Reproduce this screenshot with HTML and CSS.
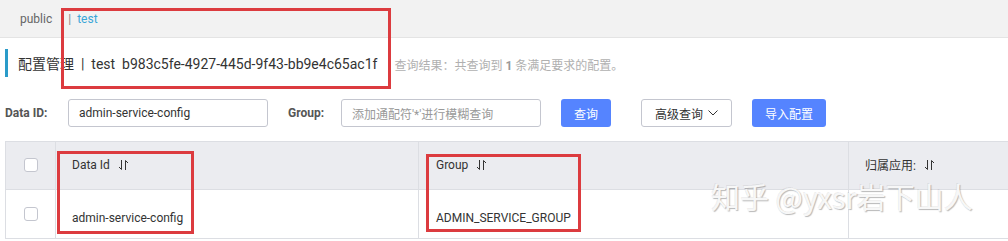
FILE: index.html
```html
<!DOCTYPE html>
<html lang="zh">
<head>
<meta charset="utf-8">
<link rel="stylesheet" href="styles.css">
</head>
<body>
<div class="page">
  <div class="topbar">
    <span class="ns">public</span>
    <span class="ns-sep">|</span>
    <span class="ns ns-active">test</span>
  </div>

  <div class="title-row">
    <div class="title-bar"></div>
    <div class="title">配置管理 &nbsp;|&nbsp; test&nbsp; b983c5fe-4927-445d-9f43-bb9e4c65ac1f</div>
    <div class="result">查询结果：共查询到 <b>1</b> 条满足要求的配置。</div>
  </div>

  <div class="search-row">
    <label class="label label-id">Data ID:</label>
    <div class="input">admin-service-config</div>
    <label class="label label-group">Group:</label>
    <div class="input placeholder">添加通配符'*'进行模糊查询</div>
    <button class="btn btn-primary btn-query">查询</button>
    <button class="btn btn-normal btn-adv">高级查询
      <svg class="caret" width="10" height="6" viewBox="0 0 10 6"><path d="M0.5 0.5 L5 5 L9.5 0.5" fill="none" stroke="#333" stroke-width="1"/></svg>
    </button>
    <button class="btn btn-primary btn-import">导入配置</button>
  </div>

  <div class="table">
    <div class="tr thead">
      <div class="td col-check"><span class="checkbox"></span></div>
      <div class="td col-id">Data Id
        <svg class="sort" width="11" height="12" viewBox="0 0 11 12"><path d="M3.5 1 V10.5 L1 8" fill="none" stroke="#333" stroke-width="1"/><path d="M7.5 11 V1.5 L10 4" fill="none" stroke="#333" stroke-width="1"/></svg>
      </div>
      <div class="td col-group">Group
        <svg class="sort" width="11" height="12" viewBox="0 0 11 12"><path d="M3.5 1 V10.5 L1 8" fill="none" stroke="#333" stroke-width="1"/><path d="M7.5 11 V1.5 L10 4" fill="none" stroke="#333" stroke-width="1"/></svg>
      </div>
      <div class="td col-app">归属应用:
        <svg class="sort" width="11" height="12" viewBox="0 0 11 12"><path d="M3.5 1 V10.5 L1 8" fill="none" stroke="#333" stroke-width="1"/><path d="M7.5 11 V1.5 L10 4" fill="none" stroke="#333" stroke-width="1"/></svg>
      </div>
    </div>
    <div class="tr tbody">
      <div class="td col-check"><span class="checkbox"></span></div>
      <div class="td col-id">admin-service-config</div>
      <div class="td col-group">ADMIN_SERVICE_GROUP</div>
      <div class="td col-app"></div>
    </div>
  </div>

  <div class="watermark">知乎 @yxsr岩下山人</div>
  <div class="anno anno-1"></div>
  <div class="anno anno-2"></div>
  <div class="anno anno-3"></div>
</div>
</body>
</html>
```

FILE: styles.css
```css
html, body {
  margin: 0;
  padding: 0;
  background: #fff;
}
body {
  width: 1008px;
  height: 241px;
  overflow: hidden;
  font-family: Roboto, "Noto Sans CJK SC", sans-serif;
  color: #333;
  font-size: 12px;
}
.page {
  position: relative;
  width: 1008px;
  height: 241px;
  overflow: hidden;
}

/* top namespace bar */
.topbar {
  height: 37px;
  background: #f2f2f2;
  border-bottom: 1px solid #e4e4e4;
  display: flex;
  align-items: center;
  padding-left: 20px;
}
.ns {
  color: #666;
  font-size: 12px;
}
.ns-sep {
  color: #888;
  margin-left: 16px;
  margin-right: 6px;
}
.ns-active {
  color: #3aa6d8;
}

/* title */
.title-row {
  display: flex;
  align-items: center;
  height: 28px;
  margin-top: 11px;
  padding-left: 5px;
}
.title-bar {
  width: 3px;
  height: 28px;
  background: #2a9bc9;
  margin-right: 10px;
}
.title {
  font-size: 14px;
  color: #333;
  white-space: nowrap;
}
.result {
  margin-left: 17px;
  font-size: 12px;
  color: #b0b0b0;
  white-space: nowrap;
  padding-top: 2px;
}
.result b {
  color: #999;
}

/* search */
.search-row {
  display: flex;
  align-items: center;
  height: 28px;
  margin-top: 22px;
  padding-left: 5px;
}
.label {
  font-weight: bold;
  color: #555;
  font-size: 12px;
  white-space: nowrap;
}
.label-id {
  width: 63px;
}
.label-group {
  margin-left: 20px;
  width: 53px;
}
.input {
  width: 200px;
  height: 28px;
  box-sizing: border-box;
  border: 1px solid #c4c6cf;
  border-radius: 3px;
  padding-left: 10px;
  display: flex;
  align-items: center;
  color: #333;
  font-size: 12px;
}
.input.placeholder {
  color: #999;
}
.btn {
  height: 28px;
  box-sizing: border-box;
  border-radius: 3px;
  font-family: Roboto, "Noto Sans CJK SC", sans-serif;
  font-size: 12px;
  display: flex;
  align-items: center;
  justify-content: center;
  padding: 0;
  gap: 5px;
}
.btn-primary {
  background: #5584ff;
  border: none;
  color: #fff;
}
.btn-normal {
  background: #fff;
  border: 1px solid #c4c6cf;
  color: #333;
}
.btn-query {
  margin-left: 20px;
  width: 50px;
}
.btn-adv {
  margin-left: 30px;
  width: 91px;
}
.btn-import {
  margin-left: 20px;
  width: 74px;
}

/* table */
.table {
  margin-top: 14px;
  margin-left: 5px;
  border-top: 1px solid #dcdee3;
  border-left: 1px solid #dcdee3;
}
.tr {
  display: flex;
  height: 48px;
  border-bottom: 1px solid #dcdee3;
}
.thead {
  height: 47px;
  background: #ebecf0;
}
.td {
  display: flex;
  align-items: center;
  box-sizing: border-box;
  border-right: 1px solid #dcdee3;
  font-size: 12px;
  color: #333;
  white-space: nowrap;
}
.col-check {
  width: 50px;
  justify-content: center;
}
.col-id {
  width: 363px;
  padding-left: 16px;
}
.col-group {
  width: 430px;
  padding-left: 17px;
}
.col-app {
  flex: 1;
  padding-left: 16px;
  border-right: none;
}
.thead .td {
  padding-bottom: 2px;
}
.tbody .td {
  padding-top: 8px;
}
.tbody .col-check {
  padding-top: 0;
}
.sort {
  margin-left: 8px;
}
.checkbox {
  width: 14px;
  height: 14px;
  box-sizing: border-box;
  border: 1px solid #c4c6cf;
  border-radius: 3px;
  background: #fff;
}

/* overlays */
.watermark {
  position: absolute;
  left: 711px;
  top: 175px;
  font-family: "Noto Sans CJK SC", sans-serif;
  font-size: 29px;
  color: #f7f7f7;
  white-space: nowrap;
  text-shadow: 1px 1px 1px rgba(0, 0, 0, 0.28), -1px -1px 0 rgba(0, 0, 0, 0.06);
}
.anno {
  position: absolute;
  box-sizing: border-box;
  border: 3px solid #dc3b3f;
}
.anno-1 {
  left: 61px;
  top: 8px;
  width: 330px;
  height: 81px;
}
.anno-2 {
  left: 57px;
  top: 151px;
  width: 137px;
  height: 83px;
}
.anno-3 {
  left: 426px;
  top: 154px;
  width: 155px;
  height: 78px;
}
```
